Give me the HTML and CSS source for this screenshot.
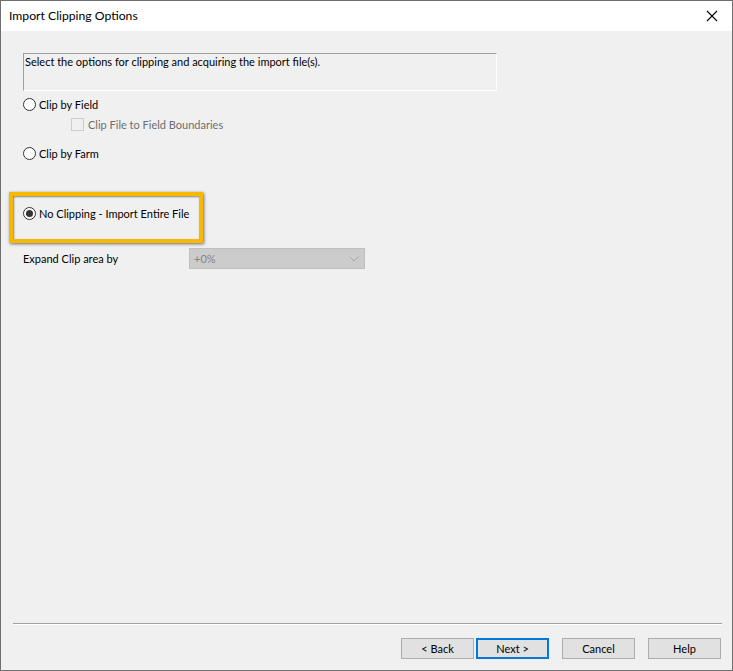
FILE: index.html
```html
<!DOCTYPE html>
<html lang="en">
<head>
    <meta charset="UTF-8">
    <title>Import Clipping Options</title>
    <link rel="stylesheet" href="styles.css">
</head>
<body>
    <div class="window">
        <div class="titlebar">
            <span class="title">Import Clipping Options</span>
            <svg class="close" width="12" height="12" viewBox="0 0 12 12">
                <path d="M1 1 L11 11 M11 1 L1 11" stroke="#000" stroke-width="1.1" fill="none"/>
            </svg>
        </div>
        <div class="content">
            <div class="desc">Select the options for clipping and acquiring the import file(s).</div>

            <label class="radio-row field-row">
                <span class="radio"></span>
                <span>Clip by Field</span>
            </label>
            <label class="check-row">
                <span class="checkbox"></span>
                <span>Clip File to Field Boundaries</span>
            </label>
            <label class="radio-row farm-row">
                <span class="radio"></span>
                <span>Clip by Farm</span>
            </label>

            <div class="highlight">
                <label class="radio-row">
                    <span class="radio checked"></span>
                    <span>No Clipping - Import Entire File</span>
                </label>
            </div>

            <div class="expand-row">
                <span class="expand-label">Expand Clip area by</span>
                <div class="combo">
                    <span>+0%</span>
                    <svg width="10" height="6" viewBox="0 0 10 6">
                        <path d="M0.5 0.5 L5 5 L9.5 0.5" stroke="#a8a8a8" fill="none"/>
                    </svg>
                </div>
            </div>

            <div class="spacer"></div>
            <div class="separator"></div>
            <div class="buttons">
                <button class="btn">&lt; Back</button>
                <button class="btn default">Next &gt;</button>
                <button class="btn gap">Cancel</button>
                <button class="btn gap">Help</button>
            </div>
        </div>
    </div>
</body>
</html>
```

FILE: styles.css
```css
body {
    margin: 0;
    padding: 0;
    font-family: Lato, "Noto Sans", sans-serif;
    font-size: 11px;
    color: #000;
}

.window {
    width: 731px;
    height: 669px;
    border: 1px solid #6f6f6f;
    background: #f0f0f0;
    display: flex;
    flex-direction: column;
}

.titlebar {
    height: 30px;
    background: #fff;
    display: flex;
    align-items: center;
    justify-content: space-between;
    padding: 0 14px 0 8px;
}

.title {
    font-size: 12.2px;
    margin-top: -1px;
}

.content {
    flex: 1;
    display: flex;
    flex-direction: column;
    padding: 22px 11px 11px 11px;
}

.desc {
    margin-left: 11px;
    width: 471px;
    height: 36px;
    border-top: 1px solid #a0a0a0;
    border-left: 1px solid #a0a0a0;
    border-right: 1px solid #fff;
    border-bottom: 1px solid #fff;
    padding: 0 0 0 1px;
    line-height: 16px;
}

.radio-row {
    display: flex;
    align-items: center;
    height: 16px;
}

.field-row {
    margin: 5px 0 0 11px;
}

.farm-row {
    margin: 13px 0 0 11px;
}

.radio {
    width: 11px;
    height: 11px;
    border: 1px solid #333;
    border-radius: 50%;
    background: #fff;
    margin-right: 3px;
    position: relative;
}

.radio.checked::after {
    content: "";
    position: absolute;
    left: 2px;
    top: 2px;
    width: 7px;
    height: 7px;
    border-radius: 50%;
    background: #333;
}

.check-row {
    display: flex;
    align-items: center;
    height: 16px;
    margin: 4px 0 0 59px;
    color: #6d6d6d;
}

.checkbox {
    width: 11px;
    height: 11px;
    border: 1px solid #cccccc;
    background: #f0f0f0;
    margin-right: 4px;
}

.highlight {
    width: 194px;
    height: 51px;
    margin: 31px 0 0 -3px;
    border: 4px solid #f9b700;
    box-shadow: 1px 1px 3px rgba(0, 0, 0, 0.55), inset 1px 1px 2px rgba(0, 0, 0, 0.45);
    padding: 9px 0 0 10px;
    box-sizing: border-box;
}

.expand-row {
    display: flex;
    align-items: center;
    margin: 5px 0 0 11px;
}

.expand-label {
    width: 166px;
}

.combo {
    width: 165px;
    height: 19px;
    border: 1px solid #bfbfbf;
    background: #cccccc;
    color: #838383;
    display: flex;
    align-items: center;
    justify-content: space-between;
    padding: 0 5px 0 4px;
}

.spacer {
    flex: 1;
}

.separator {
    height: 1px;
    background: #a0a0a0;
    border-bottom: 1px solid #fff;
    margin: 0 0 0 1px;
    width: 709px;
}

.buttons {
    display: flex;
    justify-content: flex-end;
    margin: 13px 0 0 0;
}

.btn {
    width: 73px;
    height: 21px;
    border: 1px solid #adadad;
    background: #e1e1e1;
    font-family: Lato, "Noto Sans", sans-serif;
    font-size: 11px;
    color: #000;
    padding: 0;
    margin-left: 2px;
}

.btn.default {
    border: 2px solid #0078d7;
}

.btn.gap {
    margin-left: 13px;
}
```
